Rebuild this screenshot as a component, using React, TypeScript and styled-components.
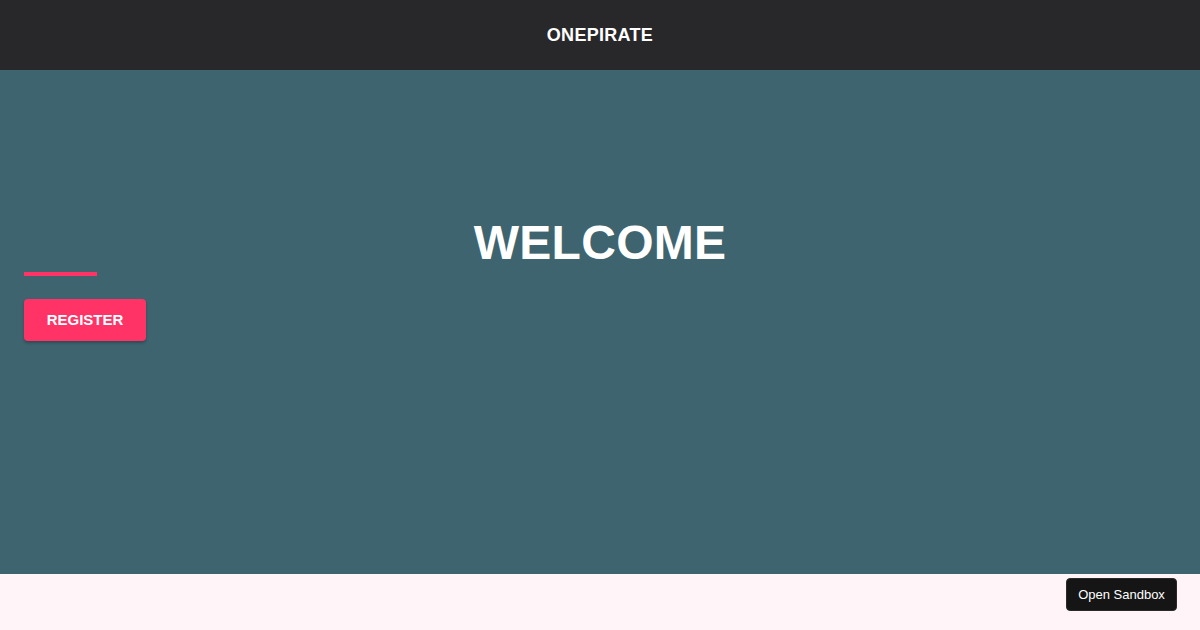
import styled, { createGlobalStyle } from "styled-components";

const Global = createGlobalStyle`
  html, body {
    margin: 0;
    padding: 0;
    background: #fff5f8;
    font-family: "Liberation Sans", Arial, sans-serif;
  }
`

const App = () => {
  return (
    <>
      <Global />
      <Page>
        <AppBar>
          <Brand>ONEPIRATE</Brand>
        </AppBar>
        <Hero>
          <Title>WELCOME</Title>
          <Rule />
          <Register>REGISTER</Register>
        </Hero>
        <Footer>
          <SandboxButton>Open Sandbox</SandboxButton>
        </Footer>
      </Page>
    </>
  )
}

export default App;

const Page = styled.div`
  width: 100%;
  min-height: 630px;
  display: flex;
  flex-direction: column;
`
const AppBar = styled.header`
  height: 70px;
  background-color: #28282a;
  display: flex;
  align-items: center;
  justify-content: center;
`
const Brand = styled.div`
  color: #fff;
  font-size: 18px;
  font-weight: bold;
  line-height: 22px;
  letter-spacing: 0.3px;
`
const Hero = styled.section`
  height: 504px;
  box-sizing: border-box;
  padding: 144px 24px 0;
  background-color: #3e6470;
  display: flex;
  flex-direction: column;
  align-items: flex-start;
`
const Title = styled.h2`
  align-self: stretch;
  margin: 0;
  color: #fff;
  text-align: center;
  font-size: 48px;
  line-height: 58px;
  font-weight: bold;
  letter-spacing: 0.3px;
`
const Rule = styled.div`
  width: 73px;
  height: 4px;
  background-color: #ff3366;
`
const Register = styled.button`
  margin-top: 23px;
  width: 122px;
  border: none;
  border-radius: 4px;
  background-color: #ff3366;
  color: #fff;
  font-family: "Liberation Sans", Arial, sans-serif;
  font-size: 15px;
  font-weight: bold;
  line-height: 18px;
  padding: 12px 0;
  box-shadow: 0 2px 3px rgba(0, 0, 0, 0.25);
`
const Footer = styled.div`
  display: flex;
  justify-content: flex-end;
  padding: 4px 23px 0;
`
const SandboxButton = styled.button`
  width: 111px;
  height: 33px;
  padding: 0;
  border: 1px solid #2a2a2a;
  border-radius: 4px;
  background-color: #151515;
  color: #fff;
  font-family: "Liberation Sans", Arial, sans-serif;
  font-size: 13px;
`
